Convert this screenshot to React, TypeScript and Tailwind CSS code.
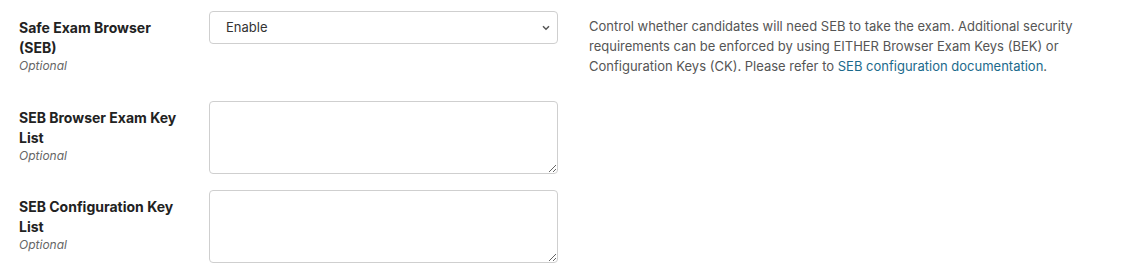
import React from 'react';

function Label({ title }: { title: string }) {
  return (
    <div className="w-[190px] shrink-0 pt-[7px]">
      <div className="max-w-[160px] text-[14px] leading-[20px] font-bold text-[#222]">{title}</div>
      <div className="text-[12px] leading-[16px] italic text-[#666]">Optional</div>
    </div>
  );
}

export default function App() {
  return (
    <div className="w-[1124px] h-[270px] bg-white pl-[19px] pt-[11px] font-['Inter','Liberation_Sans',sans-serif]">
      <div className="flex items-start min-h-[74px] mb-[16px]">
        <Label title="Safe Exam Browser (SEB)" />
        <div className="relative w-[349px] shrink-0">
          <select className="appearance-none w-full h-[33px] border border-[#cfcfcf] rounded-[4px] bg-white pl-[16px] text-[13px] text-[#333] outline-none">
            <option>Enable</option>
          </select>
          <svg className="absolute right-[8px] top-[14px] pointer-events-none" width="8" height="6" viewBox="0 0 8 6">
            <path d="M1 1.2l3 3 3-3" fill="none" stroke="#555" strokeWidth="1.5" />
          </svg>
        </div>
        <p className="ml-[31px] mt-[5px] w-[500px] text-[13px] leading-[20px] text-[#555]">
          Control whether candidates will need SEB to take the exam. Additional security requirements can be enforced by using EITHER Browser Exam Keys (BEK) or Configuration Keys (CK). Please refer to{' '}
          <a href="#" className="text-[#1b6a8c]">SEB configuration documentation</a>.
        </p>
      </div>
      <div className="flex items-start mb-[16px]">
        <Label title="SEB Browser Exam Key List" />
        <textarea className="w-[349px] h-[73px] border border-[#cfcfcf] rounded-[4px] bg-white outline-none" />
      </div>
      <div className="flex items-start">
        <Label title="SEB Configuration Key List" />
        <textarea className="w-[349px] h-[73px] border border-[#cfcfcf] rounded-[4px] bg-white outline-none" />
      </div>
    </div>
  );
}
